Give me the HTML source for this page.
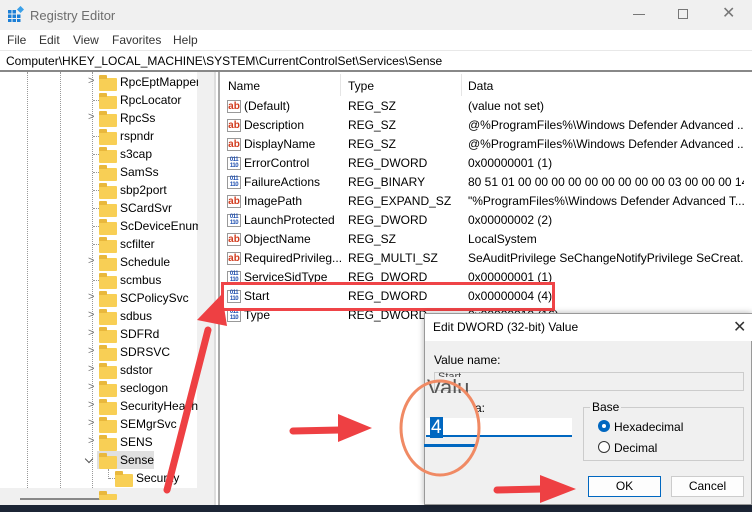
<!DOCTYPE html>
<html><head><style>
*{margin:0;padding:0;box-sizing:border-box}
body{width:752px;height:512px;overflow:hidden;position:relative;background:#fff;font-family:"Liberation Sans",sans-serif;font-size:12px;color:#000}
.a{position:absolute;white-space:nowrap}
.fold{position:absolute;width:18px;height:13px;background:#f8cf55;border-radius:1px}
.fold:before{content:"";position:absolute;left:0;top:-3px;width:8px;height:4px;background:#e9b83d;border-radius:1px 1px 0 0}
.chev{position:absolute;color:#777;font-size:11px}
.ab{position:absolute;left:227px;width:14px;height:13px;background:#fff;border:1px solid #999;color:#d23c1e;font-weight:bold;font-size:10px;line-height:11px;text-align:center}
.bin{position:absolute;left:227px;width:14px;height:13px;background:#fff;border:1px solid #999;color:#1e4fb0;font-weight:bold;font-size:6px;line-height:5.5px;text-align:center;letter-spacing:-0.5px}
</style></head><body>
<div class="a" style="left:0;top:0;width:752px;height:30px;background:#f0f0f0"></div>
<svg class="a" style="left:8px;top:6px" width="16" height="16"><g fill="#1c7fd6"><rect x="0" y="4" width="3.5" height="3.5"/><rect x="4.5" y="4" width="3.5" height="3.5"/><rect x="0" y="8.5" width="3.5" height="3.5"/><rect x="4.5" y="8.5" width="3.5" height="3.5"/><rect x="9" y="8.5" width="3.5" height="3.5"/><rect x="0" y="13" width="3.5" height="3"/><rect x="4.5" y="13" width="3.5" height="3"/><rect x="9" y="13" width="3.5" height="3"/></g><rect x="10" y="1" width="5" height="5" fill="#3aa0e8" transform="rotate(45 12.5 3.5)"/></svg>
<div class="a" style="left:30px;top:8px;font-size:13px;color:#6d6d6d">Registry Editor</div>
<div class="a" style="left:633px;top:14px;width:12px;height:1px;background:#777"></div>
<div class="a" style="left:678px;top:9px;width:10px;height:10px;border:1px solid #777"></div>
<div class="a" style="left:722px;top:3px;font-size:16px;color:#777">✕</div>
<div class="a" style="left:7px;top:33px;color:#333">File</div>
<div class="a" style="left:39px;top:33px;color:#333">Edit</div>
<div class="a" style="left:73px;top:33px;color:#333">View</div>
<div class="a" style="left:112px;top:33px;color:#333">Favorites</div>
<div class="a" style="left:173px;top:33px;color:#333">Help</div>
<div class="a" style="left:0;top:50px;width:752px;height:21px;border-top:1px solid #e8e8e8;background:#fff"></div>
<div class="a" style="left:6px;top:54px">Computer\HKEY_LOCAL_MACHINE\SYSTEM\CurrentControlSet\Services\Sense</div>
<div class="a" style="left:0;top:70px;width:752px;height:2px;background:#888"></div>
<div class="a" style="left:197px;top:72px;width:17px;height:440px;background:#f0f0f0"></div>
<div class="a" style="left:214px;top:72px;width:2px;height:440px;background:#ddd"></div>
<div class="a" style="left:218px;top:72px;width:2px;height:440px;background:#aaa"></div>
<div class="a" style="left:0;top:488px;width:200px;height:17px;background:#f0f0f0"></div>
<div class="a" style="left:20px;top:498px;width:88px;height:2px;background:#888"></div>
<div class="a" style="left:0;top:505px;width:752px;height:7px;background:#1c2535"></div>
<div class="a" style="left:27px;top:72px;height:416px;border-left:1px dotted #999"></div>
<div class="a" style="left:60px;top:72px;height:416px;border-left:1px dotted #999"></div>
<div class="a" style="left:92px;top:72px;height:416px;border-left:1px dotted #999"></div>
<div class="a" style="left:97px;top:451px;width:57px;height:18px;background:#e0e0e0"></div>
<div id="tree"></div>
<div class="a" style="left:340px;top:74px;width:1px;height:22px;background:#e5e5e5"></div>
<div class="a" style="left:461px;top:74px;width:1px;height:22px;background:#e5e5e5"></div>
<div class="a" style="left:228px;top:79px">Name</div>
<div class="a" style="left:348px;top:79px">Type</div>
<div class="a" style="left:468px;top:79px">Data</div>
<div id="list"></div>
<div class="a" style="left:221px;top:282px;width:334px;height:29px;border:3px solid #ef4447"></div>
<div class="a" style="left:424px;top:313px;width:328px;height:192px;background:#f0f0f0;border:1px solid #999;box-shadow:0 0 6px rgba(0,0,0,.3)"></div>
<div class="a" style="left:425px;top:314px;width:327px;height:27px;background:#fff"></div>
<div class="a" style="left:433px;top:320px">Edit DWORD (32-bit) Value</div>
<div class="a" style="left:733px;top:317px;font-size:16px;color:#333">✕</div>
<div class="a" style="left:434px;top:353px">Value name:</div>
<div class="a" style="left:434px;top:372px;width:310px;height:19px;background:#f0f0f0;border:1px solid #ccc"></div>
<div class="a" style="left:438px;top:371px;font-size:11px;color:#444;height:6px;overflow:hidden">Start</div>
<div class="a" style="left:427px;top:375px;font-size:22px;color:#555;height:18px;overflow:hidden">Valu</div>
<div class="a" style="left:475px;top:401px">a:</div>
<div class="a" style="left:426px;top:418px;width:146px;height:19px;background:#fff;border-bottom:2px solid #0067c0"></div>
<div class="a" style="left:430px;top:417px;background:#0067c0;color:#fff;font-size:19px;line-height:21px;padding:0 1px">4</div>
<div class="a" style="left:424px;top:444px;width:52px;height:3px;background:#0067c0"></div>
<div class="a" style="left:583px;top:407px;width:161px;height:54px;border:1px solid #ccc"></div>
<div class="a" style="left:590px;top:400px;background:#f0f0f0;padding:0 2px">Base</div>
<div class="a" style="left:598px;top:420px;width:12px;height:12px;border-radius:50%;background:#0067c0"></div>
<div class="a" style="left:602px;top:424px;width:4px;height:4px;border-radius:50%;background:#fff"></div>
<div class="a" style="left:614px;top:420px">Hexadecimal</div>
<div class="a" style="left:598px;top:441px;width:12px;height:12px;border-radius:50%;border:1px solid #333;background:#fff"></div>
<div class="a" style="left:614px;top:441px">Decimal</div>
<div class="a" style="left:588px;top:476px;width:73px;height:21px;background:#fdfdfd;border:1px solid #0067c0;text-align:center;line-height:19px">OK</div>
<div class="a" style="left:671px;top:476px;width:73px;height:21px;background:#fdfdfd;border:1px solid #ccc;text-align:center;line-height:19px">Cancel</div>
<svg class="a" style="left:0;top:0" width="752" height="512">
<ellipse cx="440" cy="428" rx="39" ry="47" fill="none" stroke="#f08a64" stroke-width="3"/>
<g stroke="#ee4043" stroke-width="7" stroke-linecap="round" fill="#ee4043">
<line x1="167" y1="490" x2="208" y2="330"/>
<line x1="293" y1="431" x2="340" y2="430"/>
<line x1="497" y1="490" x2="542" y2="489"/>
</g>
<polygon points="222,294 197,320 227,326" fill="#ee4043"/>
<polygon points="338,414 372,428 338,442" fill="#ee4043"/>
<polygon points="540,475 576,489 540,503" fill="#ee4043"/>
</svg>
<script>
var t=[["RpcEptMapper",1],["RpcLocator",0],["RpcSs",1],["rspndr",0],["s3cap",0],["SamSs",0],["sbp2port",0],["SCardSvr",0],["ScDeviceEnum",0],["scfilter",0],["Schedule",1],["scmbus",0],["SCPolicySvc",1],["sdbus",1],["SDFRd",1],["SDRSVC",1],["sdstor",1],["seclogon",1],["SecurityHealth",1],["SEMgrSvc",1],["SENS",1],["Sense",2]];
var h="";t.forEach(function(e,i){var y=82+i*18;
h+='<div class="fold" style="left:99px;top:'+(y-4)+'px"></div><div class="a" style="left:120px;top:'+(y-7)+'px;width:78px;overflow:hidden">'+e[0]+'</div>';
if(e[1]==1)h+='<div class="chev" style="left:88px;top:'+(y-7)+'px">&gt;</div>';
else if(e[1]==2)h+='<div class="a" style="left:86px;top:'+(y-4)+'px;width:6px;height:6px;border-right:1.5px solid #555;border-bottom:1.5px solid #555;transform:rotate(45deg)"></div>';
else h+='<div class="a" style="left:93px;top:'+y+'px;width:6px;border-top:1px dotted #999"></div>';});
h+='<div class="fold" style="left:115px;top:474px"></div><div class="a" style="left:136px;top:471px">Security</div><div class="a" style="left:109px;top:478px;width:6px;border-top:1px dotted #999"></div><div class="a" style="left:108px;top:469px;height:10px;border-left:1px dotted #999"></div>';
h+='<div class="fold" style="left:99px;top:494px;height:6px"></div>';
document.getElementById("tree").innerHTML=h;
var L=[["(Default)","REG_SZ","(value not set)",0],["Description","REG_SZ","@%ProgramFiles%\\Windows Defender Advanced ...",0],["DisplayName","REG_SZ","@%ProgramFiles%\\Windows Defender Advanced ...",0],["ErrorControl","REG_DWORD","0x00000001 (1)",1],["FailureActions","REG_BINARY","80 51 01 00 00 00 00 00 00 00 00 00 03 00 00 00 14 00...",1],["ImagePath","REG_EXPAND_SZ","\"%ProgramFiles%\\Windows Defender Advanced T...",0],["LaunchProtected","REG_DWORD","0x00000002 (2)",1],["ObjectName","REG_SZ","LocalSystem",0],["RequiredPrivileg...","REG_MULTI_SZ","SeAuditPrivilege SeChangeNotifyPrivilege SeCreat...",0],["ServiceSidType","REG_DWORD","0x00000001 (1)",1],["Start","REG_DWORD","0x00000004 (4)",1],["Type","REG_DWORD","0x00000010 (16)",1]];
h="";L.forEach(function(e,i){var y=106+i*19;
h+=(e[3]?'<div class="bin" style="top:'+(y-6)+'px">011<br>110</div>':'<div class="ab" style="top:'+(y-6)+'px">ab</div>');
h+='<div class="a" style="left:244px;top:'+(y-7)+'px">'+e[0]+'</div><div class="a" style="left:348px;top:'+(y-7)+'px">'+e[1]+'</div><div class="a" style="left:468px;top:'+(y-7)+'px;width:276px;overflow:hidden">'+e[2]+'</div>';});
document.getElementById("list").innerHTML=h;
</script>
</body></html>
